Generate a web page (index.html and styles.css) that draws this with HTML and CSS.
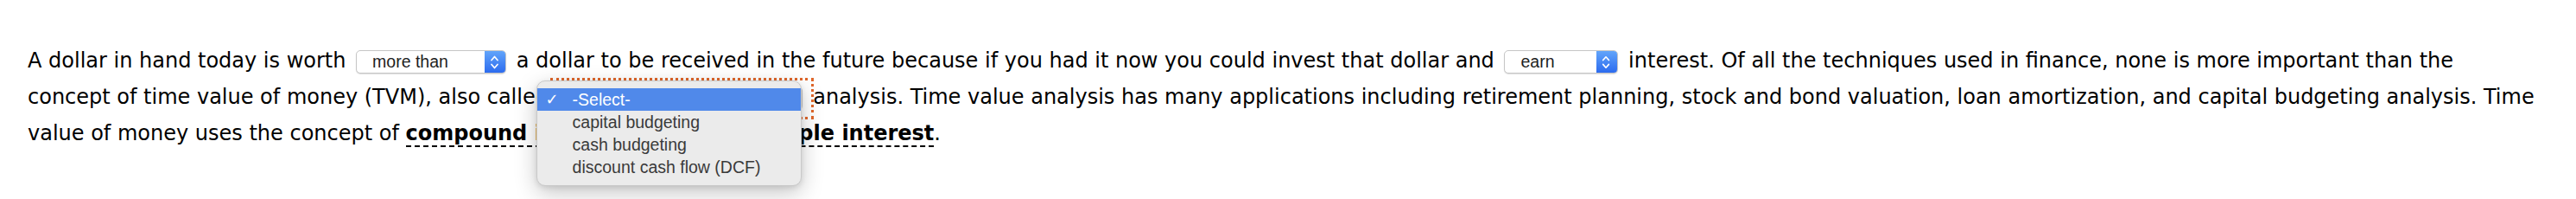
FILE: index.html
```html
<!DOCTYPE html>
<html lang="en">
<head>
<meta charset="utf-8">
<title>Time value of money</title>
<link rel="stylesheet" href="styles.css">
</head>
<body>
<div class="content">
<p class="para">A dollar in hand today is worth <span class="select w-174"><span class="val">more than</span><span class="stepper"><svg viewBox="0 0 25 27" width="25" height="27"><polyline points="8,11.5 11.5,7.5 15,11.5"/><polyline points="8,16.5 11.5,20.5 15,16.5"/></svg></span></span> a dollar to be received in the future because if you had it now you could invest that dollar and <span class="select w-132"><span class="val">earn</span><span class="stepper"><svg viewBox="0 0 25 27" width="24" height="27"><polyline points="8,11.5 11.5,7.5 15,11.5"/><polyline points="8,16.5 11.5,20.5 15,16.5"/></svg></span></span> interest. Of all the techniques used in finance, none is more important than the concept of time value of money (TVM), also called <span class="blank"><span class="select w-288"><span class="val">-Select-</span><span class="stepper"><svg viewBox="0 0 25 27" width="25" height="27"><polyline points="8,11.5 11.5,7.5 15,11.5"/><polyline points="8,16.5 11.5,20.5 15,16.5"/></svg></span></span><span class="menu"><span class="item active"><span class="check">✓</span>-Select-</span><span class="item">capital budgeting</span><span class="item">cash budgeting</span><span class="item">discount cash flow (DCF)</span></span></span> analysis. Time value analysis has many applications including retirement planning, stock and bond valuation, loan amortization, and capital budgeting analysis. Time value of money uses the concept of <span class="term">compound interest</span> rather than <span class="term">simple interest</span>.</p>
</div>
</body>
</html>
```

FILE: styles.css
```css
html, body {
  margin: 0;
  padding: 0;
  background: #ffffff;
}

.content {
  box-sizing: border-box;
  min-height: 230px;
  padding: 49px 45px 0 32px;
}

.para {
  margin: 0;
  font-family: "DejaVu Sans", Verdana, sans-serif;
  font-size: 24px;
  line-height: 42px;
  color: #000000;
}

.select {
  display: inline-flex;
  align-items: stretch;
  box-sizing: border-box;
  height: 27px;
  margin: 0 4px;
  border: 1px solid #c6c6c6;
  border-radius: 5px;
  background: #ffffff;
  box-shadow: 0 1px 1px rgba(0, 0, 0, 0.12);
  font-family: "Liberation Sans", Arial, sans-serif;
  font-size: 19.5px;
  line-height: 25px;
  color: #1e1e1e;
  vertical-align: baseline;
  overflow: hidden;
}

.w-174 { width: 174px; }
.w-132 { width: 132px; }
.w-288 { width: 288px; margin: 0; }

.val {
  flex: 1;
  padding-left: 18px;
  white-space: nowrap;
}

.stepper {
  width: 25px;
  margin: -1px -1px -1px 0;
  background: linear-gradient(#64a7fb, #2a69ee);
  border-radius: 0 5px 5px 0;
  display: flex;
}

.stepper svg {
  display: block;
}

.stepper polyline {
  fill: none;
  stroke: #ffffff;
  stroke-width: 1.7;
  stroke-linecap: round;
  stroke-linejoin: round;
}

.blank {
  position: relative;
  display: inline-block;
  line-height: 25px;
  margin: -8px -8px -9px -6px;
  padding: 7px 10px 8px 1px;
  border: 3px dotted #e0672b;
}

.menu {
  position: absolute;
  left: -19px;
  top: 0;
  width: 307px;
  box-sizing: border-box;
  padding: 8px 0;
  display: flex;
  flex-direction: column;
  background: #ebebeb;
  border: 1px solid #c9c9c9;
  border-radius: 10px;
  box-shadow: 0 8px 26px rgba(0, 0, 0, 0.22), 0 2px 6px rgba(0, 0, 0, 0.1);
  font-family: "Liberation Sans", Arial, sans-serif;
  font-size: 19.5px;
  line-height: 26px;
  color: #3a3a3a;
  z-index: 2;
}

.item {
  position: relative;
  display: block;
  height: 26px;
  padding-left: 41px;
  white-space: nowrap;
}

.item.active {
  background: #5089ea;
  color: #ffffff;
}

.check {
  position: absolute;
  left: 10px;
  top: 0;
  font-family: "DejaVu Sans", sans-serif;
  font-size: 18px;
}

.term {
  font-weight: bold;
  border-bottom: 2px dashed #000000;
}
```
